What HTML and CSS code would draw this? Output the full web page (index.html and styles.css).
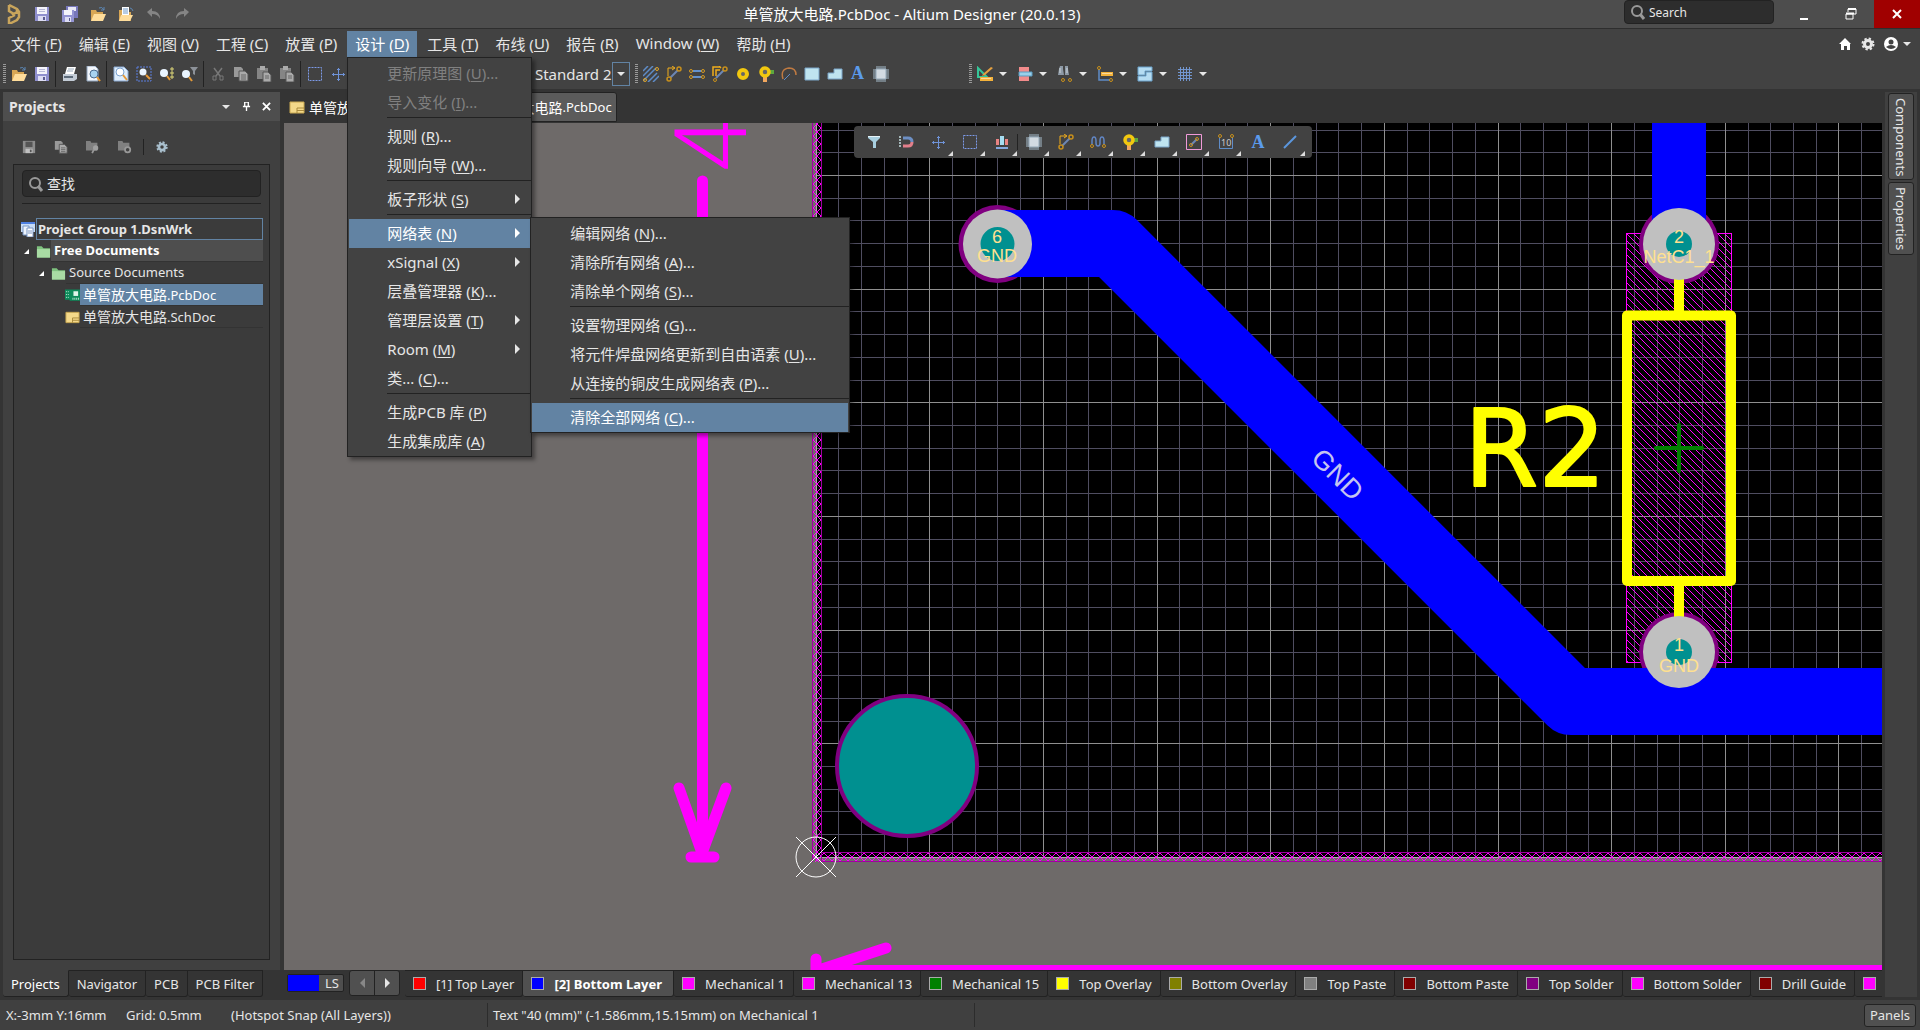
FILE: index.html
```html
<!DOCTYPE html>
<html lang="zh-CN">
<head>
<meta charset="utf-8">
<title>单管放大电路.PcbDoc - Altium Designer (20.0.13)</title>
<link rel="stylesheet" href="styles.css">
</head>
<body>

<!-- icon set -->
<svg class="defs" width="0" height="0" aria-hidden="true">
	<symbol id="logo" viewBox="0 0 16 20"><path d="M4 1l8 4v3l-5 3M4 1v6l5 3M12 5l2 3v5l-2 3-8 4v-6l6-3" fill="none" stroke="#c9a55c" stroke-width="2.5"/></symbol>
	<symbol id="save" viewBox="0 0 16 16"><path d="M1 1h14v14H1z" fill="#8f8fce"/><path d="M3 1h10v7H3z" fill="#f4f4fb"/><path d="M5 3h6v1H5zM5 5h6v1H5z" fill="#b9b9d8"/><path d="M4 10h8v5H4z" fill="#dcdcf4"/><path d="M9 11h2v3H9z" fill="#5a5a90"/></symbol>
	<symbol id="saveall" viewBox="0 0 16 16"><path d="M4 0h12v12H4z" fill="#7777ba"/><path d="M6 1h8v4H6z" fill="#e8e8f6"/><path d="M0 4h12v12H0z" fill="#9494d2"/><path d="M2 4h8v5H2z" fill="#f4f4fb"/><path d="M3 11h6v5H3z" fill="#dcdcf4"/><path d="M7 12h1v3H7z" fill="#5a5a90"/></symbol>
	<symbol id="open" viewBox="0 0 16 16"><path d="M1 15V4h5l1 2h6v9z" fill="#d9a755"/><path d="M1 15l3-7h12l-3 7z" fill="#ffdd9b"/><path d="M9 2q3-2 5 2m0 0V1m0 3h-3" fill="none" stroke="#5c87b5"/></symbol>
	<symbol id="opendoc" viewBox="0 0 16 16"><path d="M1 15V4h4l1 2h7v9z" fill="#d9a755"/><path d="M4 1h7v9H4z" fill="#fff"/><path d="M5 3h5M5 5h5M5 7h5" stroke="#6f98c8"/><path d="M1 15l2-6h12l-3 6z" fill="#ffdd9b"/><path d="M12 2q2 0 3 3" fill="none" stroke="#5c87b5"/></symbol>
	<symbol id="undo" viewBox="0 0 16 16"><path d="M1 6l5-4v3q8 0 8 8-2-5-8-5v3z" fill="#858585"/></symbol>
	<symbol id="redo" viewBox="0 0 16 16"><path d="M15 6l-5-4v3q-8 0-8 8 2-5 8-5v3z" fill="#858585"/></symbol>
	<symbol id="print" viewBox="0 0 16 16"><path d="M5 1h9l-2 7H3z" fill="#fff"/><path d="M6 3h6M5 5h6" stroke="#9ab"/><path d="M1 8h14v5l-3 2H1z" fill="#c3ccd6"/><path d="M2 11h9" stroke="#5d6b7a" stroke-width="2"/></symbol>
	<symbol id="preview" viewBox="0 0 16 16"><path d="M2 0h8l3 3v12H2z" fill="#f2f6fc" stroke="#8fa3bb"/><circle cx="9" cy="8" r="4" fill="#a8d3f0" stroke="#4d6d8f"/><path d="M12 11l3 4" stroke="#e59a38" stroke-width="2"/></symbol>
	<symbol id="zoomdoc" viewBox="0 0 16 16"><path d="M1 1h10l4 4v10H1z" fill="#dfeefc" stroke="#8aa9d2"/><circle cx="7" cy="6" r="4" fill="#fff" stroke="#7ba2cf"/><path d="M10 9l4 5" stroke="#e59a38" stroke-width="2"/></symbol>
	<symbol id="zoomsel" viewBox="0 0 16 16"><path d="M1 1h14v14H1z" fill="none" stroke="#5a7fe0" stroke-dasharray="2 1"/><circle cx="7" cy="6" r="3.500" fill="#eaf5ff"/><path d="M10 9l4 4" stroke="#e59a38" stroke-width="2"/></symbol>
	<symbol id="zoomobj" viewBox="0 0 16 16"><circle cx="5" cy="7" r="4" fill="#eaf5ff"/><path d="M8 10l3 4" stroke="#e59a38" stroke-width="2"/><path d="M12 2h2v2h-2zM12 6h2v2h-2zM12 10h2v2h-2z" fill="none" stroke="#ddd678"/></symbol>
	<symbol id="zoomfilter" viewBox="0 0 16 16"><circle cx="4" cy="8" r="4" fill="#eaf5ff"/><path d="M7 11l3 4" stroke="#e59a38" stroke-width="2"/><path d="M8 1h8l-3 4v4l-2-1V5z" fill="#8d9299"/></symbol>
	<symbol id="cut" viewBox="0 0 16 16"><path d="M4 2l6 8M12 2l-6 8" stroke="#787878" stroke-width="1.500"/><path d="M3 10h3v4H3zM10 10h3v4h-3z" fill="none" stroke="#787878"/></symbol>
	<symbol id="copy" viewBox="0 0 16 16"><path d="M1 1h7l2 2v8H1z" fill="#999"/><path d="M6 5h6l3 3v7H6z" fill="#aaa" stroke="#555"/><path d="M8 9h5M8 11h5M8 13h5" stroke="#666"/></symbol>
	<symbol id="paste" viewBox="0 0 16 16"><path d="M1 2h11v11H1z" fill="#858585"/><path d="M4 0h5v4H4z" fill="#aaa"/><path d="M7 6h5l3 3v7H7z" fill="#aaa" stroke="#555"/><path d="M9 10h4M9 12h4" stroke="#666"/></symbol>
	<symbol id="select" viewBox="0 0 16 16"><path d="M1.500 1.500h13v13h-13z" fill="none" stroke="#7d9ae8" stroke-dasharray="2 1"/></symbol>
	<symbol id="move" viewBox="0 0 16 16"><path d="M8.500 2v13M2 8.500h13" stroke="#6f93d8"/><path d="M7 3.500h3M7 13.500h3M3.500 7v3M13.500 7v3" stroke="#6f93d8"/></symbol>
	<symbol id="hatch" viewBox="0 0 16 16"><path d="M0 5l5-5M0 10L10 0M0 15L13 2M5 16l9-9M10 16l6-6" stroke="#5f8cc7" stroke-width="1.500"/><circle cx="14" cy="3" r="1.500" fill="none" stroke="#e0a526"/><circle cx="2" cy="14" r="1.500" fill="none" stroke="#e0a526"/></symbol>
	<symbol id="route" viewBox="0 0 16 16"><path d="M4 12l8-8" stroke="#6d87b5" stroke-width="2"/><circle cx="3" cy="13" r="2" fill="none" stroke="#c8901c" stroke-width="1.500"/><circle cx="13" cy="3" r="2" fill="none" stroke="#c8901c" stroke-width="1.500"/><path d="M2 10V2h6M6 0l3 2-3 2" fill="none" stroke="#f0ad1d"/></symbol>
	<symbol id="diff" viewBox="0 0 16 16"><path d="M3 5h10M3 11h10" stroke="#6290cd" stroke-width="2"/><g fill="#424242" stroke="#d49a22"><circle cx="2" cy="5" r="1.500"/><circle cx="14" cy="5" r="1.500"/><circle cx="2" cy="11" r="1.500"/><circle cx="14" cy="11" r="1.500"/></g></symbol>
	<symbol id="multi" viewBox="0 0 16 16"><path d="M4 12l8-8" stroke="#6d87b5" stroke-width="2"/><circle cx="3" cy="14" r="1.500" fill="none" stroke="#c8901c"/><circle cx="13" cy="3" r="2" fill="none" stroke="#c8901c" stroke-width="1.500"/><path d="M1 10V1h7M4 10V4h4M7 0l2 2" fill="none" stroke="#f0ad1d" stroke-width="1.500"/></symbol>
	<symbol id="via" viewBox="0 0 16 16"><circle cx="8" cy="8" r="4" fill="#666" stroke="#f2c80f" stroke-width="4"/></symbol>
	<symbol id="pad" viewBox="0 0 16 16"><path d="M5 8h4v8H5z" fill="#f3a75e"/><path d="M8 4h8v4H8z" fill="#5da63e"/><circle cx="7" cy="6" r="4" fill="#666" stroke="#f2c80f" stroke-width="3.500"/></symbol>
	<symbol id="arc" viewBox="0 0 16 16"><path d="M2 13Q-1 3 8 2q7 0 7 7" fill="none" stroke="#bf7a42" stroke-width="1.500"/><path d="M3 14l6-6" stroke="#5f8cc7"/></symbol>
	<symbol id="rect" viewBox="0 0 16 16"><path d="M1 2h14v12H1z" fill="#bfe4f0" stroke="#7ba5c8"/></symbol>
	<symbol id="poly" viewBox="0 0 16 16"><path d="M1 13V7h6V3h8v10z" fill="#bfe4f0" stroke="#7ba5c8"/></symbol>
	<symbol id="chip" viewBox="0 0 16 16"><path d="M4 0v16M6 0v16M8 0v16M10 0v16M12 0v16M0 4h16M0 6h16M0 8h16M0 10h16M0 12h16" stroke="#a6bccb"/><path d="M3 3h10v10H3z" fill="#d3dbe2" stroke="#95a9b8"/></symbol>
	<symbol id="draft" viewBox="0 0 16 16"><path d="M1 2v9h9z" fill="none" stroke="#35c598" stroke-width="2"/><path d="M6 8l8-7 2 1-8 7-3 1z" fill="#e4a040"/><path d="M3 11h13v4H3z" fill="#f4b23a"/><path d="M5 12v1M7 12v1M9 12v1M11 12v1M13 12v1" stroke="#fff"/></symbol>
	<symbol id="align" viewBox="0 0 16 16"><path d="M2 1h10v5H2zM2 10h10v5H2z" fill="#f28b8b"/><path d="M2 6h13v4H2z" fill="#9bd0ea" stroke="#5b9bc0"/></symbol>
	<symbol id="find" viewBox="0 0 16 16"><path d="M3 0h3v3l1 6H1l1-6zM8 0h3v3l1 6H8z" fill="#8e9aa6"/><path d="M3 2v5M10 2v5" stroke="#cfd6dc"/><circle cx="6" cy="14" r="1.500" fill="none" stroke="#c8901c"/><circle cx="13" cy="14" r="1.500" fill="none" stroke="#c8901c"/></symbol>
	<symbol id="dim" viewBox="0 0 16 16"><path d="M2 3v11h11" fill="none" stroke="#5f8cc7" stroke-width="1.500"/><path d="M4 6h12v4H4z" fill="#f4b23a"/><path d="M6 7v1M8 7v1M10 7v1M12 7v1M14 7v1" stroke="#fff"/><circle cx="2" cy="2" r="1.500" fill="none" stroke="#c8901c"/><circle cx="14" cy="14" r="1.500" fill="none" stroke="#c8901c"/></symbol>
	<symbol id="room" viewBox="0 0 16 16"><path d="M1 1h14v4H8v4H1zM15 6v9H1v-5h8V6z" fill="#b5dcf2" stroke="#6ba2cb"/></symbol>
	<symbol id="grid" viewBox="0 0 16 16"><path d="M3.500 1v14M6.500 1v14M9.500 1v14M12.500 1v14M1 3.500h14M1 6.500h14M1 9.500h14M1 12.500h14" stroke="#7296cf"/></symbol>
	<symbol id="filter" viewBox="0 0 16 16"><path d="M2 2h12v2l-4 4v6H7V8L2 4z" fill="#a8cfe0"/><path d="M2 2h12v1H2z" fill="#e6f3f8"/></symbol>
	<symbol id="magnet" viewBox="0 0 16 16"><path d="M5 4h5q4 0 4 4" fill="none" stroke="#6d8fc4" stroke-width="3"/><path d="M5 12h5q4 0 4-4" fill="none" stroke="#e27f8b" stroke-width="3"/><path d="M1 3h2M1 6h2M1 9h2M1 12h2" stroke="#a3b6b8" stroke-width="2"/></symbol>
	<symbol id="bars" viewBox="0 0 16 16"><path d="M2 5h3v6H2zM11 5h3v6h-3z" fill="#e88383"/><path d="M6 2h4v9H6z" fill="#a6def2"/><path d="M2 13h12v2H2z" fill="#84a9e0"/></symbol>
	<symbol id="wave" viewBox="0 0 16 16"><path d="M2 11V7q0-4 2-4t2 4v2q0 3 2 3t2-3V7q0-4 2-4t2 4v4" fill="none" stroke="#6286c4" stroke-width="1.500"/><circle cx="2" cy="12" r="1.500" fill="#424242" stroke="#c8901c"/><circle cx="14" cy="12" r="1.500" fill="#424242" stroke="#c8901c"/></symbol>
	<symbol id="boxroute" viewBox="0 0 16 16"><path d="M.5.5h15v15H.5z" fill="none" stroke="#f09ad8"/><path d="M5 11l6-6" stroke="#6d87b5" stroke-width="2"/><circle cx="5" cy="11" r="1.500" fill="none" stroke="#c8901c"/><circle cx="11" cy="5" r="1.500" fill="none" stroke="#c8901c"/></symbol>
	<symbol id="measure" viewBox="0 0 16 16"><path d="M1.500 3v11.500h13V3" fill="none" stroke="#5f8cc7"/><circle cx="2" cy="2" r="1.500" fill="none" stroke="#c8901c"/><circle cx="14" cy="2" r="1.500" fill="none" stroke="#c8901c"/><text x="3" y="12" font-size="9" fill="#ccc">10</text></symbol>
	<symbol id="line" viewBox="0 0 16 16"><path d="M2 14L14 2" stroke="#5b96dd" stroke-width="2"/></symbol>
	<symbol id="home" viewBox="0 0 16 16"><path d="M8 2l6 6h-1v6h-3v-4H7v4H4V8H2z" fill="#fff"/></symbol>
	<symbol id="gear" viewBox="0 0 16 16"><circle cx="8" cy="8" r="3.500" fill="none" stroke="currentColor" stroke-width="3"/><circle cx="8" cy="8" r="5.500" fill="none" stroke="currentColor" stroke-width="2" stroke-dasharray="2.320 2"/></symbol>
	<symbol id="user" viewBox="0 0 16 16"><circle cx="8" cy="8" r="7" fill="#fff"/><circle cx="8" cy="6" r="2.500" fill="#424242"/><path d="M3 11q5-4 10 0-5 4-10 0z" fill="#424242"/></symbol>
	<symbol id="caret" viewBox="0 0 8 4"><path d="M0 0h8L4 4z" fill="currentColor"/></symbol>
	<symbol id="search" viewBox="0 0 16 16"><circle cx="7" cy="7" r="5" fill="none" stroke="#999" stroke-width="2"/><path d="M10 10l4 5" stroke="#999" stroke-width="3"/></symbol>
	<symbol id="pin" viewBox="0 0 10 10"><path d="M3 0h4v5H3zM1 5h8M5 5v5" fill="none" stroke="#fff" stroke-width="1.500"/></symbol>
	<symbol id="cross" viewBox="0 0 10 10"><path d="M1 1l8 8M9 1L1 9" stroke="#fff" stroke-width="2"/></symbol>
	<symbol id="minimize" viewBox="0 0 12 12"><path d="M2 11h8" stroke="#fff" stroke-width="2"/></symbol>
	<symbol id="restore" viewBox="0 0 12 12"><path d="M3 4V1h8v5H9M1 6h7v5H1z" fill="none" stroke="#fff"/><path d="M3 1h8M1 5.500h8" stroke="#fff" stroke-width="2"/></symbol>
	<symbol id="greysave" viewBox="0 0 16 16"><path d="M1 1h14v14H1z" fill="#8c8c8c"/><path d="M4 2h8v6H4z" fill="#555"/><path d="M4 10h8v5H4z" fill="#c0c0c0"/><path d="M9 11h2v3H9z" fill="#555"/></symbol>
	<symbol id="greyopen" viewBox="0 0 16 16"><path d="M0 1h5l1 2h7v9H0z" fill="#808080"/><circle cx="11" cy="9" r="3" fill="#a0a0a0"/><path d="M9 11l-2 4" stroke="#999" stroke-width="2"/></symbol>
	<symbol id="greygear" viewBox="0 0 16 16"><path d="M0 1h5l1 2h7v9H0z" fill="#808080"/><circle cx="11" cy="11" r="3" fill="#424242" stroke="#999" stroke-width="2"/></symbol>
	<symbol id="group" viewBox="0 0 16 16"><path d="M1 1h14v10H1z" fill="#c7dcf6"/><path d="M1 1h14v2H1z" fill="#4d7fe0"/><path d="M3 5h6v9H3z" fill="#eef4fc" stroke="#7896c4"/><path d="M7 7h6v9H7z" fill="#fff" stroke="#7896c4"/><path d="M8 10h4M8 12h4" stroke="#7896c4"/></symbol>
	<symbol id="folder" viewBox="0 0 16 16"><path d="M1 3h5l2 2h7v10H1z" fill="#7fc27f"/><path d="M1 6h14v9H1z" fill="#a9dca4"/></symbol>
	<symbol id="pcb" viewBox="0 0 16 16"><path d="M0 2h16v12H5v-1H0z" fill="#0d8a5a"/><path d="M1 4.500h4M1 7.500h4M1 10.500h4" stroke="#c9f2df" stroke-dasharray="1 1"/><path d="M9 4h5v5H9z" fill="#dff5ea"/><path d="M8 12h8" stroke="#b7e8d2" stroke-width="2" stroke-dasharray="1 1"/></symbol>
	<symbol id="sch" viewBox="0 0 16 16"><path d="M1 3h14v11H1z" fill="#f4d98a" stroke="#c9a851"/><path d="M8 9h7M8 11.500h7M8 9v5" stroke="#a98a3c"/></symbol>
	<symbol id="expand" viewBox="0 0 6 6"><path d="M6 0v6H0z" fill="#fff"/></symbol>
	<symbol id="arrow" viewBox="0 0 5 10"><path d="M0 0l5 5-5 5z" fill="currentColor"/></symbol>
</svg>

<div class="app">

<header class="titlebar">
	<div class="quick">
		<svg class="logo"><use href="#logo"/></svg>
		<button><svg><use href="#save"/></svg></button>
		<button><svg><use href="#saveall"/></svg></button>
		<button><svg><use href="#open"/></svg></button>
		<button><svg><use href="#opendoc"/></svg></button>
		<button><svg><use href="#undo"/></svg></button>
		<button><svg><use href="#redo"/></svg></button>
	</div>
	<h1>单管放大电路.PcbDoc - Altium Designer (20.0.13)</h1>
	<label class="search top-search"><svg><use href="#search"/></svg><input type="text" placeholder="Search"></label>
	<div class="window-buttons">
		<button><svg><use href="#minimize"/></svg></button>
		<button><svg><use href="#restore"/></svg></button>
		<button class="close"><svg><use href="#cross"/></svg></button>
	</div>
</header>

<nav class="menubar">
	<ul class="menus">
		<li><button>文件 (<u>F</u>)</button></li>
		<li><button>编辑 (<u>E</u>)</button></li>
		<li><button>视图 (<u>V</u>)</button></li>
		<li><button>工程 (<u>C</u>)</button></li>
		<li><button>放置 (<u>P</u>)</button></li>
		<li class="open">
			<button>设计 (<u>D</u>)</button>
			<ul class="dropdown">
				<li><button disabled>更新原理图 (<u>U</u>)...</button></li>
				<li><button disabled>导入变化 (<u>I</u>)...</button></li>
				<li class="rule"></li>
				<li><button>规则 (<u>R</u>)...</button></li>
				<li><button>规则向导 (<u>W</u>)...</button></li>
				<li class="rule"></li>
				<li><button>板子形状 (<u>S</u>)<svg><use href="#arrow"/></svg></button></li>
				<li class="rule"></li>
				<li class="hot">
					<button>网络表 (<u>N</u>)<svg><use href="#arrow"/></svg></button>
					<ul class="dropdown submenu">
						<li><button>编辑网络 (<u>N</u>)...</button></li>
						<li><button>清除所有网络 (<u>A</u>)...</button></li>
						<li><button>清除单个网络 (<u>S</u>)...</button></li>
						<li class="rule"></li>
						<li><button>设置物理网络 (<u>G</u>)...</button></li>
						<li><button>将元件焊盘网络更新到自由语素 (<u>U</u>)...</button></li>
						<li><button>从连接的铜皮生成网络表 (<u>P</u>)...</button></li>
						<li class="rule"></li>
						<li class="hot"><button>清除全部网络 (<u>C</u>)...</button></li>
					</ul>
				</li>
				<li><button>xSignal (<u>X</u>)<svg><use href="#arrow"/></svg></button></li>
				<li><button>层叠管理器 (<u>K</u>)...</button></li>
				<li><button>管理层设置 (<u>T</u>)<svg><use href="#arrow"/></svg></button></li>
				<li><button>Room (<u>M</u>)<svg><use href="#arrow"/></svg></button></li>
				<li><button>类... (<u>C</u>)...</button></li>
				<li class="rule"></li>
				<li><button>生成PCB 库 (<u>P</u>)</button></li>
				<li><button>生成集成库 (<u>A</u>)</button></li>
			</ul>
		</li>
		<li><button>工具 (<u>T</u>)</button></li>
		<li><button>布线 (<u>U</u>)</button></li>
		<li><button>报告 (<u>R</u>)</button></li>
		<li><button>Window (<u>W</u>)</button></li>
		<li><button>帮助 (<u>H</u>)</button></li>
	</ul>
	<div class="account">
		<button><svg><use href="#home"/></svg></button>
		<button><svg><use href="#gear"/></svg></button>
		<button><svg><use href="#user"/></svg><svg class="caret"><use href="#caret"/></svg></button>
	</div>
</nav>

<div class="toolbars">
	<div class="toolbar standard">
		<button><svg><use href="#open"/></svg></button>
		<button><svg><use href="#save"/></svg></button>
		<i></i>
		<button><svg><use href="#print"/></svg></button>
		<button><svg><use href="#preview"/></svg></button>
		<i></i>
		<button><svg><use href="#zoomdoc"/></svg></button>
		<button><svg><use href="#zoomsel"/></svg></button>
		<button><svg><use href="#zoomobj"/></svg></button>
		<button><svg><use href="#zoomfilter"/></svg></button>
		<i></i>
		<button><svg><use href="#cut"/></svg></button>
		<button><svg><use href="#copy"/></svg></button>
		<button><svg><use href="#paste"/></svg></button>
		<button><svg><use href="#paste"/></svg></button>
		<i></i>
		<button><svg><use href="#select"/></svg></button>
		<button><svg><use href="#move"/></svg></button>
		<label class="view-mode">
			<select><option>Altium Standard 2D</option></select>
			<span class="drop"><svg class="caret"><use href="#caret"/></svg></span>
		</label>
	</div>
	<div class="toolbar wiring">
		<button><svg><use href="#hatch"/></svg></button>
		<button><svg><use href="#route"/></svg></button>
		<button><svg><use href="#diff"/></svg></button>
		<button><svg><use href="#multi"/></svg></button>
		<button><svg><use href="#via"/></svg></button>
		<button><svg><use href="#pad"/></svg></button>
		<button><svg><use href="#arc"/></svg></button>
		<button><svg><use href="#rect"/></svg></button>
		<button><svg><use href="#poly"/></svg></button>
		<button class="letter">A</button>
		<button><svg><use href="#chip"/></svg></button>
	</div>
	<div class="toolbar utils">
		<button><svg><use href="#draft"/></svg><svg class="caret"><use href="#caret"/></svg></button>
		<button><svg><use href="#align"/></svg><svg class="caret"><use href="#caret"/></svg></button>
		<button><svg><use href="#find"/></svg><svg class="caret"><use href="#caret"/></svg></button>
		<button><svg><use href="#dim"/></svg><svg class="caret"><use href="#caret"/></svg></button>
		<button><svg><use href="#room"/></svg><svg class="caret"><use href="#caret"/></svg></button>
		<button><svg><use href="#grid"/></svg><svg class="caret"><use href="#caret"/></svg></button>
	</div>
</div>

<main class="workspace">

	<aside class="left">
		<section class="panel">
			<div class="panel-head">
				<h2>Projects</h2>
				<button><svg class="caret"><use href="#caret"/></svg></button>
				<button><svg class="small"><use href="#pin"/></svg></button>
				<button><svg class="small"><use href="#cross"/></svg></button>
			</div>
			<div class="panel-tools">
				<button><svg><use href="#greysave"/></svg></button>
				<button><svg><use href="#copy"/></svg></button>
				<button><svg><use href="#greyopen"/></svg></button>
				<button><svg><use href="#greygear"/></svg></button>
				<i></i>
				<button class="options"><svg><use href="#gear"/></svg></button>
			</div>
			<div class="panel-box">
				<label class="search"><svg><use href="#search"/></svg><input type="text" placeholder="查找"></label>
				<hr>
				<ul class="tree">
					<li class="root"><svg><use href="#group"/></svg><b>Project Group 1.DsnWrk</b></li>
					<li class="free"><svg class="expand"><use href="#expand"/></svg><svg><use href="#folder"/></svg><b>Free Documents</b></li>
					<li class="source"><svg class="expand"><use href="#expand"/></svg><svg><use href="#folder"/></svg><span>Source Documents</span></li>
					<li class="doc current"><svg><use href="#pcb"/></svg><a href="#"><span class="han">单管放大电路</span>.PcbDoc</a></li>
					<li class="doc"><svg><use href="#sch"/></svg><a href="#"><span class="han">单管放大电路</span>.SchDoc</a></li>
				</ul>
			</div>
		</section>
		<div class="tabs panel-tabs">
			<button class="on">Projects</button>
			<button>Navigator</button>
			<button>PCB</button>
			<button>PCB Filter</button>
		</div>
	</aside>

	<section class="editor">
		<div class="doc-tabs">
			<button><svg><use href="#sch"/></svg><span class="han">单管放大电路</span>.SchDoc</button>
			<button class="on"><svg><use href="#pcb"/></svg><span class="han">单管放大电路</span>.PcbDoc</button>
		</div>

		<div class="canvas">
			<!-- drawn in screen units, one unit is one pixel -->
			<svg class="board" viewBox="284 123 1598 847" preserveAspectRatio="xMinYMin slice">
				<defs>
					<pattern id="hatching" width="7" height="7" patternUnits="userSpaceOnUse"><path d="M0 0l7 7" stroke="#f0f" stroke-width="1" shape-rendering="crispEdges"/></pattern>
					<pattern id="keepV" x="812" width="10" height="8" patternUnits="userSpaceOnUse"><path d="M1 0l8 8M9 0L1 8" stroke="#f0f"/><path d="M0 0v8M10 0v8" stroke="#a000a0" stroke-width="2"/></pattern>
					<pattern id="keepH" y="852" width="8" height="10" patternUnits="userSpaceOnUse"><path d="M0 1l8 8M0 9l8-8" stroke="#f0f"/><path d="M0 0h8M0 10h8" stroke="#a000a0" stroke-width="2"/></pattern>
				</defs>

				<rect x="816" y="123" width="1066" height="735" fill="#000"/>
				<g shape-rendering="crispEdges" fill="none">
					<path d="M815.600 490H1882" stroke="#4f4d60" stroke-width="735" stroke-dasharray="1 21.730"/>
					<path d="M1349 857.900V123" stroke="#4f4d60" stroke-width="1066" stroke-dasharray="1 21.730"/>
					<path d="M815.600 490H1882" stroke="#8f8f8f" stroke-width="735" stroke-dasharray="1 112.650"/>
					<path d="M1349 857.900V123" stroke="#8f8f8f" stroke-width="1066" stroke-dasharray="1 112.650"/>
				</g>
				<path d="M816.500 123V857.500H1882" fill="none" stroke="#aaa"/>
				<rect x="812" y="123" width="10" height="739" fill="url(#keepV)"/>
				<rect x="822" y="852" width="1060" height="10" fill="url(#keepH)"/>

				<!-- 40 mm dimension -->
				<g fill="none" stroke="#f0f" stroke-width="11" stroke-linecap="round" stroke-linejoin="round">
					<path d="M702.500 181V853M679 788l23 65 24-65M691 857h23"/>
					<path d="M816 970.500H1890M816 959v12l70-23"/>
				</g>
				<text class="dim-text" transform="translate(746 172) rotate(-90)">40</text>

				<!-- origin -->
				<g fill="none" stroke="#fff"><circle cx="816" cy="857" r="20"/><path d="M796 837l40 40M836 837l-40 40"/></g>

				<circle cx="907" cy="766" r="70" fill="#009090" stroke="#800080" stroke-width="4"/>

				<!-- R2 body -->
				<rect x="1626.500" y="233.500" width="105" height="429" fill="url(#hatching)" stroke="#f0f"/>
				<g fill="#800080"><circle cx="997.500" cy="244" r="39"/><circle cx="1679" cy="244" r="40"/><circle cx="1679" cy="652" r="40"/></g>
				<path d="M997 243.500H1113L1571 701.500H1890" fill="none" stroke="#00f" stroke-width="67" stroke-linejoin="round"/>
				<path d="M1679 123V244" stroke="#00f" stroke-width="54"/>
				<g fill="none" stroke="#ff0" stroke-width="10" stroke-linejoin="round"><rect x="1627" y="315.500" width="104" height="265.500"/><path d="M1679 270v45M1679 581v45"/></g>
				<path d="M1656 448h46M1679 425v46" stroke="#008000" stroke-width="4" stroke-linecap="round"/>
				<g fill="#c0c0c0"><circle cx="997.500" cy="244" r="34.500"/><circle cx="1679" cy="244" r="36"/><circle cx="1679" cy="652" r="36"/></g>
				<g fill="#009090"><circle cx="997.500" cy="244" r="17"/><circle cx="1679" cy="244" r="13"/><circle cx="1679" cy="652" r="13"/></g>

				<g class="pad-text">
					<text x="997" y="243">6</text><text x="997" y="262">GND</text>
					<text x="1679" y="243">2</text><text x="1679" y="263">NetC1_1</text>
					<text x="1679" y="651">1</text><text x="1679" y="672">GND</text>
				</g>
				<text class="net-text" transform="translate(1331 481) rotate(45)">GND</text>
				<text class="designator" x="1464" y="486">R2</text>
			</svg>

			<div class="active-bar">
				<button><svg><use href="#filter"/></svg></button>
				<button><svg><use href="#magnet"/></svg></button>
				<button class="more"><svg><use href="#move"/></svg></button>
				<button class="more"><svg><use href="#select"/></svg></button>
				<button class="more divider"><svg><use href="#bars"/></svg></button>
				<button class="more"><svg><use href="#chip"/></svg></button>
				<button class="more"><svg><use href="#route"/></svg></button>
				<button class="more"><svg><use href="#wave"/></svg></button>
				<button class="more"><svg><use href="#pad"/></svg></button>
				<button class="more"><svg><use href="#poly"/></svg></button>
				<button class="more"><svg><use href="#boxroute"/></svg></button>
				<button class="more"><svg><use href="#measure"/></svg></button>
				<button class="letter">A</button>
				<button class="more"><svg><use href="#line"/></svg></button>
			</div>
		</div>

		<div class="layer-bar">
			<button class="layer-set"><span></span>LS</button>
			<div class="scroll">
				<button disabled><svg class="back"><use href="#arrow"/></svg></button>
				<button><svg><use href="#arrow"/></svg></button>
			</div>
			<div class="tabs layers">
				<button><span class="swatch red"></span>[1] Top Layer</button>
				<button class="on"><span class="swatch blue"></span>[2] Bottom Layer</button>
				<button><span class="swatch magenta"></span>Mechanical 1</button>
				<button><span class="swatch magenta"></span>Mechanical 13</button>
				<button><span class="swatch green"></span>Mechanical 15</button>
				<button><span class="swatch yellow"></span>Top Overlay</button>
				<button><span class="swatch olive"></span>Bottom Overlay</button>
				<button><span class="swatch gray"></span>Top Paste</button>
				<button><span class="swatch maroon"></span>Bottom Paste</button>
				<button><span class="swatch purple"></span>Top Solder</button>
				<button><span class="swatch magenta"></span>Bottom Solder</button>
				<button><span class="swatch maroon"></span>Drill Guide</button>
				<button><span class="swatch magenta"></span></button>
			</div>
		</div>
	</section>

	<aside class="right">
		<button>Components</button>
		<button>Properties</button>
	</aside>
</main>

<footer class="status">
	<span class="position">X:-3mm Y:16mm</span>
	<span class="step">Grid: 0.5mm</span>
	<span class="snap">(Hotspot Snap (All Layers))</span>
	<span class="object">Text "40 (mm)" (-1.586mm,15.15mm) on Mechanical 1</span>
	<button>Panels</button>
</footer>

</div>
</body>
</html>
```

FILE: styles.css
```css
* {
	box-sizing: border-box;
}
body {
	margin: 0;
	background: #343434;
	color: #e6e6e6;
	font-family: "Noto Sans", "Noto Sans CJK SC", sans-serif;
	font-size: 13px;
}
ul {
	margin: 0;
	padding: 0;
	list-style: none;
}
button {
	display: flex;
	align-items: center;
	justify-content: center;
	flex: none;
	padding: 0;
	border: 0;
	background: none;
	color: inherit;
	font: inherit;
	white-space: pre;
}
svg {
	display: block;
	flex: none;
	width: 16px;
	height: 16px;
}
.defs {
	position: absolute;
	width: 0;
	height: 0;
}
.caret {
	width: 8px;
	height: 4px;
}
.han {
	font-size: 14px;
}
.app {
	display: flex;
	flex-direction: column;
	height: 100vh;
	overflow: hidden;
}

/* title bar */
.titlebar {
	display: flex;
	align-items: center;
	flex: none;
	height: 29px;
	border-bottom: 1px solid #2e2e2e;
	background: #4d4d4d;
}
.quick {
	display: flex;
	align-items: center;
	width: 200px;
	padding-left: 5px;
}
.quick button {
	width: 28px;
}
.logo {
	width: 16px;
	height: 20px;
	margin-right: 7px;
}
h1 {
	flex: 1;
	margin: 0;
	color: #fff;
	font-size: 15px;
	font-weight: normal;
	line-height: 28px;
	text-align: center;
}
.search {
	display: flex;
	align-items: center;
	gap: 3px;
	height: 27px;
	padding: 0 5px;
	border: 1px solid #222;
	border-radius: 4px;
	background: #2d2d2d;
}
.search input {
	flex: 1;
	min-width: 0;
	padding: 0;
	border: 0;
	background: none;
	color: #e6e6e6;
	font: inherit;
	font-size: 14px;
}
.search input::placeholder {
	color: #e6e6e6;
}
.top-search {
	align-self: flex-start;
	width: 150px;
	height: 24px;
	margin-right: 6px;
}
.top-search input {
	font-size: 12px;
}
.window-buttons {
	display: flex;
}
.window-buttons button {
	width: 47px;
	height: 28px;
}
.window-buttons svg {
	width: 12px;
	height: 12px;
}
.window-buttons .close {
	width: 46px;
	background: #a00000;
}
.window-buttons .close svg {
	width: 10px;
	height: 10px;
}

/* menus */
.menubar {
	display: flex;
	justify-content: space-between;
	flex: none;
	height: 29px;
	padding: 2px 9px 1px 3px;
	background: #424242;
	font-size: 15px;
}
.menus {
	display: flex;
	gap: 1px;
}
.menus > li {
	position: relative;
}
.menus > li > button {
	height: 26px;
	padding: 0 8px 2px;
}
.menus > .open > button {
	background: #6283a3;
	color: #fff;
}
.menus > .open {
	padding: 0 1px;
}
u {
	text-underline-offset: 2px;
}
.dropdown {
	position: absolute;
	z-index: 5;
	top: 100%;
	left: 1px;
	width: 185px;
	padding: 1px 1px 0;
	border: 1px solid #222;
	background: #424242;
	box-shadow: 3px 3px 4px rgba(0, 0, 0, .4);
}
.dropdown li {
	position: relative;
}
.dropdown button {
	justify-content: flex-start;
	width: 100%;
	height: 29px;
	padding: 0 10px 2px 38px;
}
.dropdown button:disabled {
	color: #808080;
}
.dropdown button svg {
	width: 5px;
	height: 10px;
	margin-left: auto;
}
.dropdown .rule {
	height: 5px;
	margin: 0 -1px 0 38px;
	border-top: 1px solid #222;
}
.dropdown .hot > button {
	background: #6283a3;
	color: #fff;
}
.submenu {
	top: -2px;
	left: 100%;
	width: 320px;
}
.account {
	display: flex;
	gap: 7px;
}
.account button {
	gap: 4px;
}

/* toolbars */
.toolbars {
	display: flex;
	flex: none;
	height: 31px;
	background: #424242;
}
.toolbar {
	display: flex;
	align-items: center;
	padding-left: 3px;
}
.toolbar::before {
	content: "";
	width: 3px;
	height: 19px;
	margin-right: 1px;
	background: repeating-linear-gradient(#999 0 1px, #424242 1px 2px);
}
.toolbar button {
	width: 23px;
	height: 26px;
}
.toolbar i, .panel-tools i {
	width: 1px;
	height: 26px;
	margin: 0 2px;
	background: #222;
}
.standard {
	width: 630px;
}
.wiring {
	width: 336px;
	padding-left: 5px;
}
.toolbar.utils button {
	gap: 6px;
	width: 40px;
	padding-right: 2px;
}
.wiring .letter, .active-bar .letter {
	color: #5b9bec;
	font-family: "Liberation Serif", serif;
	font-size: 18px;
	font-weight: bold;
}
.view-mode {
	display: flex;
	align-items: center;
	width: 145px;
	margin-left: auto;
}
.view-mode select {
	flex: 1;
	min-width: 0;
	height: 24px;
	padding: 0;
	border: 0;
	background: none;
	color: #e6e6e6;
	font: inherit;
	font-size: 15px;
	text-overflow: clip;
	appearance: none;
}
.drop {
	display: flex;
	align-items: center;
	justify-content: center;
	width: 18px;
	height: 24px;
	border: 1px solid #6283a3;
}

/* workspace */
.workspace {
	display: flex;
	flex: 1;
	min-height: 0;
	padding: 3px;
}
.left {
	display: flex;
	flex-direction: column;
	width: 277px;
	margin-right: 4px;
}
.panel {
	display: flex;
	flex-direction: column;
	flex: 1;
	background: #404040;
}
.panel-head {
	display: flex;
	align-items: center;
	height: 29px;
	padding: 0 4px 0 6px;
	background: #4e4e4e;
}
.panel-head button {
	width: 20px;
}
.small {
	width: 9px;
	height: 9px;
}
h2 {
	flex: 1;
	margin: 0;
	font-size: 14px;
}
.panel-tools {
	display: flex;
	align-items: center;
	height: 43px;
	padding: 8px 10px 0;
}
.panel-tools button {
	width: 32px;
}
.panel-tools i {
	height: 16px;
}
.panel-tools svg {
	width: 14px;
	height: 14px;
}
.options {
	color: #a9bfcd;
}
.panel-box {
	flex: 1;
	margin: 0 10px 10px;
	padding: 5px 6px 0 5px;
	border: 1px solid #222;
	background: #3b3b3b;
}
.panel-box .search {
	margin: 0 2px 0 3px;
}
hr {
	margin: 6px 2px 14px 3px;
	border: 0;
	border-top: 1px solid #222;
}
.tree li {
	display: flex;
	align-items: center;
	height: 22px;
}
.tree b, .tree a, .tree li > span {
	flex: 1;
	height: 22px;
	padding: 0 3px;
	border-bottom: 1px solid #333;
	line-height: 21px;
	color: inherit;
	text-decoration: none;
}
.tree svg {
	width: 15px;
}
.tree .expand {
	width: 5px;
	height: 5px;
	margin-right: 7px;
}
.tree .root {
	padding-left: 1px;
}
.tree .root svg {
	width: 16px;
}
.tree .root b {
	border: 1px solid #6283a3;
	padding: 0 1px;
	line-height: 20px;
}
.tree .free {
	padding-left: 5px;
}
.tree .free b {
	background: #4e4e4e;
	color: #fff;
}
.tree .source {
	padding-left: 20px;
}
.tree .doc {
	padding-left: 46px;
}
.tree .current a {
	background: #6283a3;
	color: #fff;
}

/* tabs */
.tabs {
	display: flex;
}
.tabs button {
	height: 27px;
	padding: 0 8px;
	border: 1px solid #222;
	border-left-width: 0;
	border-radius: 0 0 3px 3px;
	background: #343434;
}
.panel-tabs .on {
	border-color: #404040 #222 #222;
	background: #404040;
	color: #fff;
}
.doc-tabs {
	display: flex;
	height: 31px;
}
.doc-tabs button {
	height: 30px;
	margin-right: 7px;
	padding: 0 4px 0 5px;
	color: #fff;
}
.doc-tabs svg {
	margin-right: 4px;
}
.doc-tabs .on {
	border: 1px solid #222;
	border-radius: 3px 3px 0 0;
	background: #5b5b5b;
}

/* editor */
.editor {
	display: flex;
	flex-direction: column;
	flex: 1;
	min-width: 0;
}
.canvas {
	position: relative;
	flex: 1;
	min-height: 0;
	overflow: hidden;
	background: #6e6a69;
}
.board {
	width: 100%;
	height: 100%;
}
.dim-text {
	fill: #f0f;
	font-family: Roboto, sans-serif;
	font-size: 100px;
	font-weight: 300;
}
.pad-text {
	fill: #ffe090;
	font-family: "Liberation Sans Narrow", "Liberation Sans", sans-serif;
	font-size: 18px;
	text-anchor: middle;
}
.net-text {
	fill: #c4c4f0;
	font-family: "Liberation Sans", sans-serif;
	font-size: 27px;
	text-anchor: middle;
}
.designator {
	fill: #ff0;
	stroke: #ff0;
	stroke-width: 2px;
	stroke-linejoin: round;
	font-family: "DejaVu Sans", sans-serif;
	font-size: 107px;
}
.active-bar {
	position: absolute;
	top: 3px;
	left: 50%;
	display: flex;
	height: 32px;
	padding: 0 6px 0 4px;
	border-radius: 4px;
	background: #424242;
	transform: translateX(-50%);
}
.active-bar button {
	position: relative;
	width: 32px;
	height: 32px;
}
.active-bar .divider {
	background: linear-gradient(#222, #222) right / 1px 16px no-repeat;
}
.more::after {
	content: "";
	position: absolute;
	right: 1px;
	bottom: 2px;
	width: 5px;
	height: 5px;
	background: #ddd;
	clip-path: polygon(100% 0, 100% 100%, 0 100%);
}

/* layers */
.layer-bar {
	display: flex;
	overflow: hidden;
	height: 27px;
}
.layer-set {
	justify-content: flex-start;
	width: 57px;
	height: 18px;
	margin: 4px 5px 0 3px;
	border: 1px solid #222;
	border-radius: 2px;
	background: #4e4e4e;
}
.layer-set span {
	width: 31px;
	height: 16px;
	margin-right: 6px;
	background: #00f;
}
.scroll {
	display: flex;
	width: 51px;
	height: 26px;
	margin-right: 5px;
	border: 1px solid #222;
	border-radius: 3px;
	background: #505050;
}
.scroll button {
	flex: 1;
}
.scroll button + button {
	border-left: 1px solid #222;
}
.scroll button:disabled {
	color: #888;
}
.scroll svg {
	width: 5px;
	height: 10px;
}
.scroll .back {
	transform: scaleX(-1);
}
.layers {
	flex: 1;
	min-width: 0;
	overflow: hidden;
}
.layers .on {
	padding-right: 11px;
	background: #505050;
	color: #fff;
	font-weight: bold;
}
.swatch {
	width: 13px;
	height: 13px;
	margin-right: 10px;
	border: 1px solid #aaa;
}
.red { background: #f00; }
.blue { background: #00f; }
.magenta { background: #f0f; }
.green { background: #008000; }
.yellow { background: #ff0; }
.olive { background: #808000; }
.gray { background: #808080; }
.maroon { background: #800000; }
.purple { background: #800080; }

.right {
	width: 32px;
	margin-left: 3px;
	padding: 1px 3px;
	background: #404040;
}
.right button {
	width: 26px;
	margin-bottom: 2px;
	padding: 4px 0 3px;
	border: 1px solid #222;
	border-radius: 3px;
	background: #505050;
	writing-mode: vertical-rl;
}

/* status bar */
.status {
	display: flex;
	align-items: center;
	flex: none;
	height: 30px;
	padding: 0 4px 0 6px;
	background: #404040;
}
.status span {
	line-height: 24px;
}
.position {
	width: 120px;
}
.step {
	width: 105px;
}
.snap, .object {
	width: 257px;
	margin-right: 5px;
	border-right: 1px solid #2c2c2c;
}
.object {
	width: 482px;
}
.status button {
	height: 23px;
	margin-left: auto;
	padding: 0 5px;
	border: 1px solid #222;
	border-radius: 3px;
	background: #505050;
}
```
